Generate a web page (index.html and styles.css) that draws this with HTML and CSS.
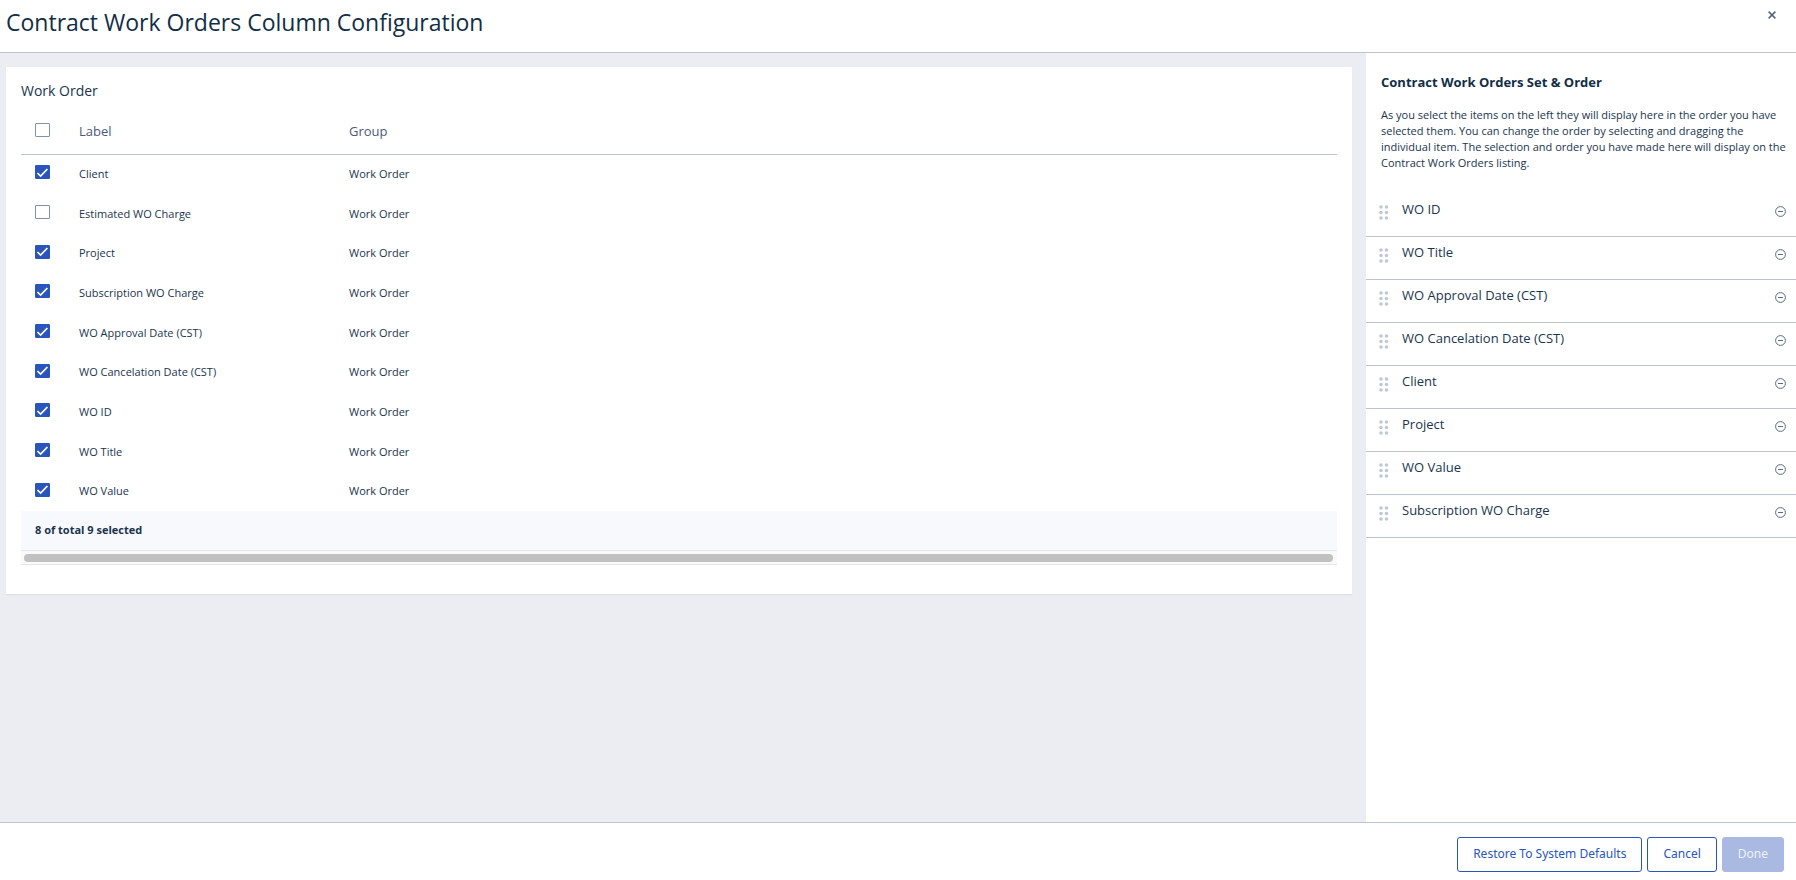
FILE: index.html
```html
<!DOCTYPE html>
<html lang="en">
<head>
  <meta charset="UTF-8">
  <meta name="viewport" content="width=device-width, initial-scale=1">
  <title>Contract Work Orders Column Configuration</title>
  <link rel="stylesheet" href="styles.css">
</head>
<body>

  <svg class="sprite" aria-hidden="true">
    <symbol id="grip" viewBox="0 0 10 15">
      <circle cx="2" cy="2" r="1.8"/><circle cx="7.5" cy="2" r="1.8"/>
      <circle cx="2" cy="7.5" r="1.8"/><circle cx="7.5" cy="7.5" r="1.8"/>
      <circle cx="2" cy="13" r="1.8"/><circle cx="7.5" cy="13" r="1.8"/>
    </symbol>
    <symbol id="minus" viewBox="0 0 11 11">
      <circle cx="5.5" cy="5.5" r="4.9"/><path d="M3 5.5h5"/>
    </symbol>
  </svg>

  <header class="header">
    <h1 class="page-title">Contract Work Orders Column Configuration</h1>
    <button class="close" type="button" aria-label="Close">
      <svg width="8" height="8" viewBox="0 0 8 8"><path d="M.6 .6l6.8 6.8M7.4 .6l-6.8 6.8"/></svg>
    </button>
  </header>

  <main class="content">
    <section class="card">
      <h2 class="card-title">Work Order</h2>
      <table class="columns">
        <thead>
          <tr>
            <th class="col-check"><input type="checkbox" aria-label="Select all"></th>
            <th class="col-label">Label</th>
            <th>Group</th>
          </tr>
        </thead>
        <tbody>
          <tr>
            <td><input type="checkbox" id="client" checked></td>
            <td><label for="client">Client</label></td>
            <td>Work Order</td>
          </tr>
          <tr>
            <td><input type="checkbox" id="estimated"></td>
            <td><label for="estimated">Estimated WO Charge</label></td>
            <td>Work Order</td>
          </tr>
          <tr>
            <td><input type="checkbox" id="project" checked></td>
            <td><label for="project">Project</label></td>
            <td>Work Order</td>
          </tr>
          <tr>
            <td><input type="checkbox" id="subscription" checked></td>
            <td><label for="subscription">Subscription WO Charge</label></td>
            <td>Work Order</td>
          </tr>
          <tr>
            <td><input type="checkbox" id="approval" checked></td>
            <td><label for="approval">WO Approval Date (CST)</label></td>
            <td>Work Order</td>
          </tr>
          <tr>
            <td><input type="checkbox" id="cancelation" checked></td>
            <td><label for="cancelation">WO Cancelation Date (CST)</label></td>
            <td>Work Order</td>
          </tr>
          <tr>
            <td><input type="checkbox" id="wo-id" checked></td>
            <td><label for="wo-id">WO ID</label></td>
            <td>Work Order</td>
          </tr>
          <tr>
            <td><input type="checkbox" id="wo-title" checked></td>
            <td><label for="wo-title">WO Title</label></td>
            <td>Work Order</td>
          </tr>
          <tr>
            <td><input type="checkbox" id="wo-value" checked></td>
            <td><label for="wo-value">WO Value</label></td>
            <td>Work Order</td>
          </tr>
        </tbody>
      </table>
      <div class="summary">8 of total 9 selected</div>
      <div class="scrollbar"><div class="thumb"></div></div>
    </section>

    <aside class="panel">
      <h2 class="panel-title">Contract Work Orders Set &amp; Order</h2>
      <p class="panel-text">As you select the items on the left they will display here in the order you have selected them. You can change the order by selecting and dragging the individual item. The selection and order you have made here will display on the Contract Work Orders listing.</p>
      <ul class="order-list">
        <li class="order-item">
          <svg class="grip"><use href="#grip"/></svg>
          <span class="order-name">WO ID</span>
          <button class="remove" type="button" aria-label="Remove WO ID"><svg><use href="#minus"/></svg></button>
        </li>
        <li class="order-item">
          <svg class="grip"><use href="#grip"/></svg>
          <span class="order-name">WO Title</span>
          <button class="remove" type="button" aria-label="Remove WO Title"><svg><use href="#minus"/></svg></button>
        </li>
        <li class="order-item">
          <svg class="grip"><use href="#grip"/></svg>
          <span class="order-name">WO Approval Date (CST)</span>
          <button class="remove" type="button" aria-label="Remove WO Approval Date (CST)"><svg><use href="#minus"/></svg></button>
        </li>
        <li class="order-item">
          <svg class="grip"><use href="#grip"/></svg>
          <span class="order-name">WO Cancelation Date (CST)</span>
          <button class="remove" type="button" aria-label="Remove WO Cancelation Date (CST)"><svg><use href="#minus"/></svg></button>
        </li>
        <li class="order-item">
          <svg class="grip"><use href="#grip"/></svg>
          <span class="order-name">Client</span>
          <button class="remove" type="button" aria-label="Remove Client"><svg><use href="#minus"/></svg></button>
        </li>
        <li class="order-item">
          <svg class="grip"><use href="#grip"/></svg>
          <span class="order-name">Project</span>
          <button class="remove" type="button" aria-label="Remove Project"><svg><use href="#minus"/></svg></button>
        </li>
        <li class="order-item">
          <svg class="grip"><use href="#grip"/></svg>
          <span class="order-name">WO Value</span>
          <button class="remove" type="button" aria-label="Remove WO Value"><svg><use href="#minus"/></svg></button>
        </li>
        <li class="order-item">
          <svg class="grip"><use href="#grip"/></svg>
          <span class="order-name">Subscription WO Charge</span>
          <button class="remove" type="button" aria-label="Remove Subscription WO Charge"><svg><use href="#minus"/></svg></button>
        </li>
      </ul>
    </aside>
  </main>

  <footer class="footer">
    <button class="btn" type="button">Restore To System Defaults</button>
    <button class="btn" type="button">Cancel</button>
    <button class="btn btn-primary" type="button" disabled>Done</button>
  </footer>

</body>
</html>
```
FILE: styles.css
```css
* {
  box-sizing: border-box;
}
body {
  margin: 0;
  min-height: 100vh;
  display: flex;
  flex-direction: column;
  background: #fff;
  color: #1a354d;
  font-family: "Open Sans", "Noto Sans", sans-serif;
  font-size: 11px;
}
h1, h2, p, ul {
  margin: 0;
  padding: 0;
}
button {
  font-family: "Noto Sans", "Open Sans", sans-serif;
  cursor: pointer;
}
.sprite {
  display: none;
}

/* header */
.header {
  display: flex;
  justify-content: space-between;
  align-items: flex-start;
  padding: 6px 16px 14px 6px;
  border-bottom: 1px solid #bcc4d1;
}
.page-title {
  color: #122e46;
  font-size: 23px;
  line-height: 32px;
  font-weight: 400;
}
.close {
  display: flex;
  padding: 5px 4px;
  border: 0;
  background: none;
}
.close svg {
  stroke: #56657f;
  stroke-width: 1.5;
}

/* content */
.content {
  flex: 1;
  display: flex;
  gap: 14px;
  padding-left: 6px;
  background: #ebedf3;
}
.card {
  flex: 1;
  align-self: flex-start;
  margin-top: 14px;
  padding: 12px 15px 29px;
  background: #fff;
  box-shadow: 0 1px 1px #dcdfe5;
}
.card-title {
  font-size: 14px;
  line-height: 24px;
  font-weight: 400;
}
.columns {
  width: 100%;
  border-collapse: collapse;
  table-layout: fixed;
}
.columns th {
  height: 51px;
  padding: 6px 0 0;
  border-bottom: 1px solid #bcc4d1;
  color: #4d5b75;
  font-size: 13px;
  font-weight: 400;
  text-align: left;
}
.columns td {
  height: 40px;
  padding: 0 0 2px;
}
.columns tr:nth-child(3n) td {
  height: 39px;
}
.columns .col-check {
  width: 58px;
}
.columns .col-label {
  width: 270px;
}
.columns input {
  display: block;
  appearance: none;
  width: 15px;
  height: 14px;
  margin: 0 0 2px 14px;
  border: 1px solid #8292ab;
  border-radius: 1px;
  background: #fff;
}
.columns input:checked {
  border-color: #2955bd;
  background: #2955bd url("data:image/svg+xml,%3Csvg xmlns='http://www.w3.org/2000/svg' viewBox='0 0 13 13'%3E%3Cpath d='M1.4 7l3.2 3 6.8-7' fill='none' stroke='%23fff' stroke-width='1.7'/%3E%3C/svg%3E") center / 13px 13px no-repeat;
}
.summary {
  padding: 0 14px 2px;
  background: #f8f9fd;
  font-weight: 700;
  line-height: 37px;
}
.scrollbar {
  padding: 3px 4px 2px 3px;
  border: 1px solid #e6e6e6;
  border-width: 1px 0;
  background: #fafafa;
}
.thumb {
  height: 8px;
  border-radius: 4px;
  background: #c1c1c1;
}

/* set & order */
.panel {
  flex: 0 0 430px;
  padding-top: 19px;
  background: #fff;
}
.panel-title {
  padding: 0 15px;
  color: #122e46;
  font-size: 13px;
  line-height: 20px;
}
.panel-text {
  padding: 15px 4px 23px 15px;
  line-height: 16px;
}
.order-list {
  list-style: none;
}
.order-item {
  display: flex;
  align-items: flex-start;
  height: 43px;
  padding: 11px 10px 0 13px;
  border-bottom: 1px solid #bcc4d1;
}
.grip {
  width: 10px;
  height: 15px;
  fill: #c2c8d3;
}
.order-name {
  flex: 1;
  margin-left: 13px;
  font-size: 13px;
  line-height: 8px;
}
.remove {
  padding: 1px 0;
  border: 0;
  background: none;
}
.remove svg {
  display: block;
  width: 11px;
  height: 11px;
  fill: none;
  stroke: #5c6984;
}

/* footer */
.footer {
  display: flex;
  justify-content: flex-end;
  gap: 5px;
  padding: 14px 12px 8px;
  border-top: 1px solid #bcc4d1;
}
.btn {
  height: 35px;
  padding: 0 15px 2px;
  border: 1px solid #2955bd;
  border-radius: 3px;
  background: #fff;
  color: #2955bd;
  font-size: 12px;
}
.btn-primary {
  border-color: #a9b9e2;
  background: #a9b9e2;
  color: #eef1fa;
}
```
